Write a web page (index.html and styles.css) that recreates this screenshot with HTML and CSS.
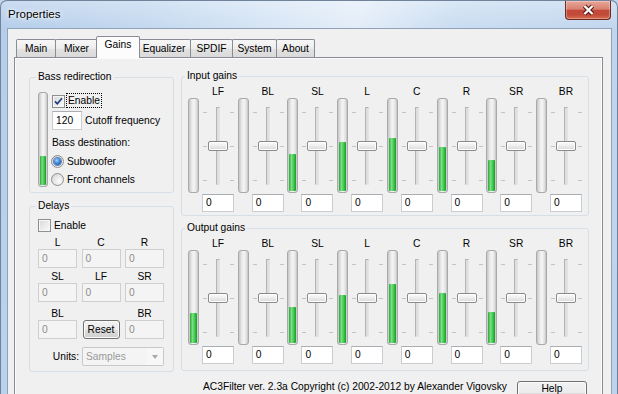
FILE: index.html
```html
<!DOCTYPE html>
<html>
<head>
<meta charset="utf-8">
<title>Properties</title>
<link rel="stylesheet" href="styles.css">
</head>
<body>
<div class="window">
  <div class="titlebar">
    <span class="title">Properties</span>
    <div class="close">
      <svg width="13" height="12" viewBox="0 0 13 12"><path d="M2.5 2 L10.5 10 M10.5 2 L2.5 10" stroke="#4b1710" stroke-width="4.4" fill="none"/><path d="M2.5 2 L10.5 10 M10.5 2 L2.5 10" stroke="#fff" stroke-width="2.4" fill="none"/></svg>
    </div>
  </div>
  <div class="client">
    <div class="tabs">
      <div class="tab w-main">Main</div>
      <div class="tab w-mixer">Mixer</div>
      <div class="tab sel">Gains</div>
      <div class="tab w-eq">Equalizer</div>
      <div class="tab w-spdif">SPDIF</div>
      <div class="tab w-system">System</div>
      <div class="tab w-about">About</div>
    </div>
    <div class="panel">
      <div class="col-left">
        <fieldset class="group bass">
          <legend>Bass redirection</legend>
          <div class="bass-body">
            <div class="meter bass-meter"><div class="fill" style="height:29px"></div></div>
            <div class="bass-controls">
              <div class="enable-row">
                <span class="cb"><svg width="11" height="11" viewBox="0 0 11 11"><path d="M2 5.3 L4.3 7.8 L9 2.3" fill="none" stroke="#203c78" stroke-width="1.7"/></svg></span>
                <span class="focus">Enable</span>
              </div>
              <div class="cutoff"><div class="edit w-120">120</div><span>Cutoff frequency</span></div>
              <div class="bdest">Bass destination:</div>
              <div class="radio-row first"><span class="rb on"><span class="dot"></span></span>Subwoofer</div>
              <div class="radio-row"><span class="rb"></span>Front channels</div>
            </div>
          </div>
        </fieldset>
        <fieldset class="group delays">
          <legend>Delays</legend>
          <div class="check-row"><span class="cb"></span>Enable</div>
          <div class="drow dlabels dl1"><span>L</span><span>C</span><span>R</span></div>
          <div class="drow"><div class="edit dis">0</div><div class="edit dis">0</div><div class="edit dis">0</div></div>
          <div class="drow dlabels dl2"><span>SL</span><span>LF</span><span>SR</span></div>
          <div class="drow"><div class="edit dis">0</div><div class="edit dis">0</div><div class="edit dis">0</div></div>
          <div class="drow dlabels dl3"><span>BL</span><span></span><span>BR</span></div>
          <div class="drow"><div class="edit dis">0</div><button class="btn reset">Reset</button><div class="edit dis">0</div></div>
          <div class="units">
            <span class="units-label">Units:</span>
            <div class="combo"><span class="combo-text">Samples</span><span class="combo-arrow"></span></div>
          </div>
        </fieldset>
      </div>
      <div class="col-right">
        <fieldset class="group gains">
          <legend>Input gains</legend>
          <div class="channels">
            <div class="ch"><span class="lbl">LF</span><div class="meter"><div class="fill" style="height:0px"></div></div><div class="slider"><div class="track"><div class="thumb"></div></div></div><div class="edit">0</div></div>
            <div class="ch"><span class="lbl">BL</span><div class="meter"><div class="fill" style="height:0px"></div></div><div class="slider"><div class="track"><div class="thumb"></div></div></div><div class="edit">0</div></div>
            <div class="ch"><span class="lbl">SL</span><div class="meter"><div class="fill" style="height:37px"></div></div><div class="slider"><div class="track"><div class="thumb"></div></div></div><div class="edit">0</div></div>
            <div class="ch"><span class="lbl">L</span><div class="meter"><div class="fill" style="height:49px"></div></div><div class="slider"><div class="track"><div class="thumb"></div></div></div><div class="edit">0</div></div>
            <div class="ch"><span class="lbl">C</span><div class="meter"><div class="fill" style="height:53px"></div></div><div class="slider"><div class="track"><div class="thumb"></div></div></div><div class="edit">0</div></div>
            <div class="ch"><span class="lbl">R</span><div class="meter"><div class="fill" style="height:44px"></div></div><div class="slider"><div class="track"><div class="thumb"></div></div></div><div class="edit">0</div></div>
            <div class="ch"><span class="lbl">SR</span><div class="meter"><div class="fill" style="height:31px"></div></div><div class="slider"><div class="track"><div class="thumb"></div></div></div><div class="edit">0</div></div>
            <div class="ch"><span class="lbl">BR</span><div class="meter"><div class="fill" style="height:0px"></div></div><div class="slider"><div class="track"><div class="thumb"></div></div></div><div class="edit">0</div></div>
          </div>
        </fieldset>
        <fieldset class="group gains out">
          <legend>Output gains</legend>
          <div class="channels">
            <div class="ch"><span class="lbl">LF</span><div class="meter"><div class="fill" style="height:30px"></div></div><div class="slider"><div class="track"><div class="thumb"></div></div></div><div class="edit">0</div></div>
            <div class="ch"><span class="lbl">BL</span><div class="meter"><div class="fill" style="height:0px"></div></div><div class="slider"><div class="track"><div class="thumb"></div></div></div><div class="edit">0</div></div>
            <div class="ch"><span class="lbl">SL</span><div class="meter"><div class="fill" style="height:36px"></div></div><div class="slider"><div class="track"><div class="thumb"></div></div></div><div class="edit">0</div></div>
            <div class="ch"><span class="lbl">L</span><div class="meter"><div class="fill" style="height:48px"></div></div><div class="slider"><div class="track"><div class="thumb"></div></div></div><div class="edit">0</div></div>
            <div class="ch"><span class="lbl">C</span><div class="meter"><div class="fill" style="height:59px"></div></div><div class="slider"><div class="track"><div class="thumb"></div></div></div><div class="edit">0</div></div>
            <div class="ch"><span class="lbl">R</span><div class="meter"><div class="fill" style="height:50px"></div></div><div class="slider"><div class="track"><div class="thumb"></div></div></div><div class="edit">0</div></div>
            <div class="ch"><span class="lbl">SR</span><div class="meter"><div class="fill" style="height:31px"></div></div><div class="slider"><div class="track"><div class="thumb"></div></div></div><div class="edit">0</div></div>
            <div class="ch"><span class="lbl">BR</span><div class="meter"><div class="fill" style="height:0px"></div></div><div class="slider"><div class="track"><div class="thumb"></div></div></div><div class="edit">0</div></div>
          </div>
        </fieldset>
        <div class="footer">
          <span class="footer-text">AC3Filter ver. 2.3a Copyright (c) 2002-2012 by Alexander Vigovsky</span>
          <button class="btn help">Help</button>
        </div>
      </div>
    </div>
  </div>
</div>
</body>
</html>
```
FILE: styles.css
```css
* { box-sizing: border-box; }
html, body { margin: 0; padding: 0; }
body {
  width: 618px;
  height: 394px;
  overflow: hidden;
  background: #bed4ec;
  font-family: "Liberation Sans", Arial, sans-serif;
  font-size: 10.25px;
  color: #000;
}

.window {
  width: 618px;
  height: 430px;
  display: flex;
  flex-direction: column;
  border: 1px solid #71839b;
  border-bottom: 0;
  border-radius: 7px 7px 0 0;
  background:
    linear-gradient(180deg, rgba(255,255,255,.3), rgba(255,255,255,0) 28px),
    linear-gradient(100deg, #b4cdea 0%, #c3d8ef 22%, #d9e7f6 42%, #e3edf8 52%, #c9dcf1 66%, #bdd3ec 100%);
}

.titlebar {
  height: 27px;
  flex: none;
  display: flex;
  align-items: flex-start;
  padding-left: 7px;
}
.title {
  margin-top: 6px;
  font-size: 11.5px;
  line-height: 14px;
  text-shadow: 0 0 6px #fff, 0 0 3px #fff;
}
.close {
  margin-left: auto;
  margin-right: 6px;
  width: 46px;
  height: 19px;
  border: 1px solid #6b2a22;
  border-top: 0;
  border-radius: 0 0 4px 4px;
  background: linear-gradient(180deg, #e8a699 0%, #d8816f 45%, #c4493a 52%, #c24a38 75%, #d66a52 100%);
  box-shadow: inset 0 0 0 1px rgba(255,255,255,.3);
  display: flex;
  align-items: center;
  justify-content: center;
}

.client {
  flex: 1;
  display: flex;
  flex-direction: column;
  margin: 0 5px 0 6px;
  border: 1px solid #8fa2ba;
  border-bottom: 0;
  background: #f0f0f0;
  padding-top: 7px;
}

.tabs {
  display: flex;
  align-items: flex-end;
  height: 21px;
  padding-left: 8px;
  flex: none;
}
.tab {
  height: 18px;
  border: 1px solid #898c95;
  border-bottom: 0;
  border-radius: 2px 2px 0 0;
  background: linear-gradient(#f7f7f7, #ededed 50%, #e2e2e2 51%, #dadada);
  text-align: center;
  line-height: 17px;
  white-space: nowrap;
}
.tab + .tab { margin-left: -1px; }
.tab.w-main { width: 40px; }
.tab.w-mixer { width: 43px; }
.tab.w-eq { width: 54px; }
.tab.w-spdif { width: 43px; }
.tab.w-system { width: 45px; }
.tab.w-about { width: 39px; }
.tab.sel {
  width: 44px;
  height: 22px;
  margin: 0 -2px -1px -2px;
  background: #fcfcfc;
  position: relative;
  z-index: 2;
  line-height: 16px;
}

.panel {
  flex: 1;
  margin: 0 8px 0 6px;
  border: 1px solid #898c95;
  background: #f0f0f0;
  box-shadow: inset 0 0 0 1px #fbfbfb;
  display: grid;
  grid-template-columns: 145px 408px;
  column-gap: 7px;
  align-items: start;
  padding: 12px 13px 0 14px;
}

.group {
  margin: 0;
  min-width: 0;
  border: 1px solid #d5dfe5;
  border-radius: 3px;
}
.group legend {
  padding: 0 2px;
  margin-left: -2px;
  line-height: 12px;
  font-size: 10.25px;
}
.gains legend { margin-left: -3px; }

.col-left {
  display: flex;
  flex-direction: column;
  margin-top: 1px;
}
.col-right {
  display: flex;
  flex-direction: column;
}

/* meters */
.meter {
  width: 11px;
  height: 95px;
  border: 1px solid #a9a9a9;
  border-radius: 3px;
  padding: 1px;
  background: linear-gradient(90deg, #c6c6c6, #ececec 35%, #f5f5f5 55%, #dedede 85%, #c0c0c0);
  display: flex;
  flex-direction: column;
  justify-content: flex-end;
  overflow: hidden;
}
.fill {
  flex: none;
  border-radius: 1px;
  background: linear-gradient(90deg, #2aa637, #79e083 35%, #44cc52 65%, #179a26);
}

/* edits */
.edit {
  height: 18px;
  border: 1px solid #c9ccd1;
  border-top-color: #abadb3;
  background: #fff;
  padding-left: 3px;
  line-height: 16px;
  white-space: nowrap;
}
.edit.dis {
  height: 19px;
  line-height: 17px;
  background: #f4f4f4;
  border-color: #cfcfcf;
  color: #8d8d8d;
}

/* checkbox & radio */
.cb {
  flex: none;
  width: 13px;
  height: 13px;
  border: 1px solid #8e8f8f;
  background: linear-gradient(135deg, #d6d8dc, #fbfbfb);
  box-shadow: inset 0 0 0 1px #f6f6f6;
  display: flex;
}
.rb {
  flex: none;
  width: 13px;
  height: 13px;
  border: 1px solid #8e8f8f;
  border-radius: 50%;
  background: radial-gradient(circle at 65% 65%, #fdfdfd, #dcdcdc 70%, #cfcfcf);
  display: flex;
  align-items: center;
  justify-content: center;
}
.rb .dot {
  width: 7px;
  height: 7px;
  border-radius: 50%;
  background: radial-gradient(circle at 40% 35%, #a8d8ff 0%, #3f86d6 45%, #16428e 100%);
  box-shadow: 0 0 0 1px #5a7fb8;
}

/* bass */
.bass { padding: 9px 0 5px 8px; }
.bass-body { display: flex; gap: 4px; }
.meter.bass-meter { width: 10px; }
.bass-controls { display: flex; flex-direction: column; }
.enable-row {
  display: flex;
  align-items: flex-end;
  height: 15px;
  margin-top: 1px;
}
.focus {
  border: 1px dotted #000;
  padding: 0 1px;
  line-height: 13px;
  margin-left: 1px;
}
.cutoff {
  display: flex;
  align-items: center;
  gap: 3px;
  margin-top: 3px;
}
.edit.w-120 { width: 30px; height: 19px; line-height: 17px; }
.bdest { margin-top: 7px; line-height: 12px; }
.radio-row {
  display: flex;
  align-items: center;
  gap: 3px;
  height: 14px;
  margin-top: 4px;
  margin-left: -1px;
}
.radio-row.first { margin-top: 5px; }

/* delays */
.delays {
  margin-top: 7px;
  padding: 7px 0 5px 8px;
}
.check-row {
  display: flex;
  align-items: center;
  gap: 3px;
  height: 13px;
}
.drow {
  display: grid;
  grid-template-columns: repeat(3, 39px);
  column-gap: 4.5px;
}
.dlabels {
  height: 12px;
  line-height: 12px;
  text-align: center;
}
.dl1 { margin-top: 5px; }
.dl2 { margin-top: 3px; }
.dl3 { margin-top: 6px; }

.btn {
  font: inherit;
  color: #000;
  padding: 0;
  border: 1px solid #707070;
  border-radius: 3px;
  background: linear-gradient(#f2f2f2 0%, #ebebeb 50%, #dddddd 51%, #cfcfcf 100%);
  box-shadow: inset 0 0 0 1px #fbfbfb;
  text-align: center;
}
.reset {
  width: 37px;
  height: 19px;
  justify-self: center;
  line-height: 16px;
}
.units {
  display: flex;
  align-items: center;
  gap: 3px;
  margin-top: 8px;
}
.units-label { width: 41px; text-align: right; }
.combo {
  width: 82px;
  height: 19px;
  border: 1px solid #c9c9c9;
  border-radius: 2px;
  background: #f4f4f4;
  display: flex;
  align-items: center;
  color: #9a9a9a;
}
.combo-text { flex: 1; padding-left: 3px; }
.combo-arrow {
  width: 17px;
  height: 100%;
  display: flex;
  align-items: center;
  justify-content: center;
  background: #f7f7f7;
}
.combo-arrow::before {
  content: "";
  border-left: 3.5px solid transparent;
  border-right: 3.5px solid transparent;
  border-top: 4px solid #a8a8a8;
}

/* gains */
.gains { padding: 4px 0 3px 6px; }
.gains.out { margin-top: 6px; padding-bottom: 6px; }
.channels {
  display: grid;
  grid-template-columns: repeat(8, 49.71px);
}
.ch {
  display: grid;
  grid-template-columns: 11px 32px;
  grid-template-rows: 12px 96px 18px;
  column-gap: 3px;
}
.ch .lbl {
  grid-column: 2;
  grid-row: 1;
  text-align: center;
  line-height: 12px;
}
.ch .meter { grid-column: 1; grid-row: 2; }
.ch .slider { grid-column: 2; grid-row: 2; }
.ch .edit { grid-column: 2; grid-row: 3; }

.slider {
  display: flex;
  justify-content: center;
  padding-top: 9px;
  background:
    linear-gradient(#c4c4c4, #c4c4c4) 1px 14px / 4px 1px no-repeat,
    linear-gradient(#c4c4c4, #c4c4c4) 1px 48px / 4px 1px no-repeat,
    linear-gradient(#c4c4c4, #c4c4c4) 1px 82px / 4px 1px no-repeat,
    linear-gradient(#c4c4c4, #c4c4c4) 28px 14px / 4px 1px no-repeat,
    linear-gradient(#c4c4c4, #c4c4c4) 28px 48px / 4px 1px no-repeat,
    linear-gradient(#c4c4c4, #c4c4c4) 28px 82px / 4px 1px no-repeat;
}
.track {
  width: 4px;
  height: 78px;
  border: 1px solid;
  border-color: #b4b4b4 #e4e4e4 #e4e4e4 #b4b4b4;
  background: #dedede;
  display: flex;
  align-items: center;
  justify-content: center;
}
.thumb {
  flex: none;
  width: 20px;
  height: 10px;
  border: 1px solid #8a8a8a;
  border-radius: 2px;
  background: linear-gradient(#fdfdfd, #ececec 50%, #d8d8d8);
  box-shadow: inset 0 0 0 1px #fff;
}

.footer {
  display: flex;
  justify-content: flex-end;
  align-items: flex-start;
  gap: 10px;
  margin-top: 10px;
  padding-right: 2px;
}
.footer-text { line-height: 12px; white-space: nowrap; }
.help {
  width: 70px;
  line-height: 12px;
  padding: 1px 0 9px;
}
```
